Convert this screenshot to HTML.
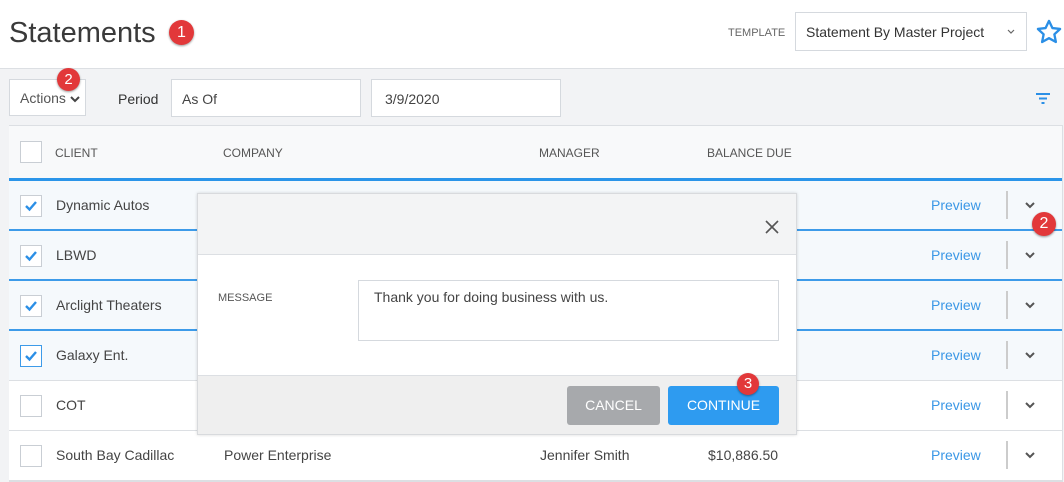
<!DOCTYPE html><html><head><style>
*{box-sizing:border-box;margin:0;padding:0}
body{width:1064px;height:482px;overflow:hidden;font-family:"Liberation Sans",sans-serif;background:#f2f3f5;position:relative;color:#333}
.a{position:absolute}
.badge{position:absolute;width:25px;height:25px;border-radius:50%;background:#e2383a;color:#fff;font-size:16px;text-align:center;line-height:25px;box-shadow:0 1px 2px rgba(0,0,0,.4)}
.cb{position:absolute;left:20px;width:22px;height:22px;border:1px solid #c9ced4;background:#fff}
.row{position:absolute;left:9px;width:1053px;height:50px;font-size:14px;color:#444}
.row span{position:absolute;top:16px}
.pv{left:922px;color:#3a97e6}
.sep{position:absolute;left:997px;top:10px;width:2px;height:28px;background:#ccc}
</style></head><body>
<div class="a" style="left:0;top:0;width:1064px;height:69px;background:#fff;border-bottom:1px solid #dcdfe3"></div>
<div class="a" style="left:9px;top:17px;font-size:29px;color:#3a3a3a">Statements</div>
<div class="badge" style="left:169px;top:20px">1</div>
<div class="a" style="left:728px;top:27px;font-size:11px;color:#666">TEMPLATE</div>
<div class="a" style="left:795px;top:12px;width:232px;height:39px;border:1px solid #d5d9de;background:#fff;font-size:14px;padding:11px 10px;color:#333">Statement By Master Project</div>
<svg class="a" style="left:1007px;top:29px" width="8" height="6"><path d="M1 1l3 3 3-3" stroke="#666" stroke-width="1.2" fill="none"/></svg>
<svg class="a" style="left:1035px;top:18px" width="28" height="28" viewBox="0 0 24 24"><path d="M12 2.5l2.9 6.1 6.6.8-4.9 4.6 1.3 6.6L12 17.3l-5.9 3.3 1.3-6.6-4.9-4.6 6.6-.8z" fill="none" stroke="#2b8fe6" stroke-width="2" stroke-linejoin="round"/></svg>

<div class="a" style="left:9px;top:79px;width:77px;height:37px;background:#fff;border:1px solid #d5d9de;font-size:14px;color:#555;padding:10px 10px">Actions</div>
<svg class="a" style="left:70px;top:95px" width="10" height="8"><path d="M1 2l4 4 4-4" stroke="#444" stroke-width="2" fill="none"/></svg>
<div class="badge" style="left:57px;top:68px;width:23px;height:23px;line-height:23px;font-size:15px">2</div>
<div class="a" style="left:118px;top:91px;font-size:14px;color:#333">Period</div>
<div class="a" style="left:171px;top:79px;width:190px;height:38px;background:#fff;border:1px solid #d5d9de;font-size:14px;padding:11px 10px;color:#444">As Of</div>
<div class="a" style="left:371px;top:79px;width:190px;height:38px;background:#fff;border:1px solid #d5d9de;font-size:14px;padding:11px 13px;color:#444">3/9/2020</div>
<svg class="a" style="left:1035px;top:92px" width="16" height="14"><path d="M1 2h14M4 6.5h8M6.5 11h3" stroke="#2b8fe6" stroke-width="2"/></svg>

<div class="a" style="left:9px;top:125px;width:1054px;height:357px;background:#fff;border:1px solid #dcdfe3"></div>
<div class="a" style="left:9px;top:126px;width:1053px;height:52px;background:#f8f9fa"></div>
<div class="cb" style="top:141px"></div>
<div class="a" style="left:55px;top:146px;font-size:12px;color:#555">CLIENT</div>
<div class="a" style="left:223px;top:146px;font-size:12px;color:#555">COMPANY</div>
<div class="a" style="left:539px;top:146px;font-size:12px;color:#555">MANAGER</div>
<div class="a" style="left:707px;top:146px;font-size:12px;color:#555">BALANCE DUE</div>
<div class="a" style="left:9px;top:178px;width:1053px;height:3px;background:#2b95e9"></div>

<div class="row" style="top:181px;background:#f5f9fc;border-bottom:2px solid #3d9be9"><span style="left:47px">Dynamic Autos</span><span class="pv">Preview</span><div class="sep"></div></div>
<div class="row" style="top:231px;background:#f5f9fc;border-bottom:2px solid #3d9be9"><span style="left:47px">LBWD</span><span class="pv">Preview</span><div class="sep"></div></div>
<div class="row" style="top:281px;background:#f5f9fc;border-bottom:2px solid #3d9be9"><span style="left:47px">Arclight Theaters</span><span class="pv">Preview</span><div class="sep"></div></div>
<div class="row" style="top:331px;background:#f5f9fc;border-bottom:1px solid #dcdfe3"><span style="left:47px">Galaxy Ent.</span><span class="pv">Preview</span><div class="sep"></div></div>
<div class="row" style="top:381px;background:#fff;border-bottom:1px solid #dcdfe3"><span style="left:47px">COT</span><span class="pv">Preview</span><div class="sep"></div></div>
<div class="row" style="top:431px;background:#fff;border-bottom:1px solid #dcdfe3"><span style="left:47px">South Bay Cadillac</span><span style="left:215px">Power Enterprise</span><span style="left:531px">Jennifer Smith</span><span style="left:699px">$10,886.50</span><span class="pv">Preview</span><div class="sep"></div></div>

<div class="cb" style="top:195px"></div><div class="cb" style="top:245px"></div><div class="cb" style="top:295px"></div><div class="cb" style="top:345px;border-color:#3d9be9"></div><div class="cb" style="top:395px"></div><div class="cb" style="top:445px"></div>
<svg class="a" style="left:24px;top:199px" width="14" height="14"><path d="M2 7l3.5 3.5L12 3" stroke="#2b8fe6" stroke-width="2.4" fill="none"/></svg>
<svg class="a" style="left:24px;top:249px" width="14" height="14"><path d="M2 7l3.5 3.5L12 3" stroke="#2b8fe6" stroke-width="2.4" fill="none"/></svg>
<svg class="a" style="left:24px;top:299px" width="14" height="14"><path d="M2 7l3.5 3.5L12 3" stroke="#2b8fe6" stroke-width="2.4" fill="none"/></svg>
<svg class="a" style="left:24px;top:349px" width="14" height="14"><path d="M2 7l3.5 3.5L12 3" stroke="#2b8fe6" stroke-width="2.4" fill="none"/></svg>

<svg class="a" style="left:1025px;top:201px" width="10" height="8"><path d="M1 2l4 4 4-4" stroke="#555" stroke-width="2" fill="none"/></svg>
<svg class="a" style="left:1025px;top:251px" width="10" height="8"><path d="M1 2l4 4 4-4" stroke="#555" stroke-width="2" fill="none"/></svg>
<svg class="a" style="left:1025px;top:301px" width="10" height="8"><path d="M1 2l4 4 4-4" stroke="#555" stroke-width="2" fill="none"/></svg>
<svg class="a" style="left:1025px;top:351px" width="10" height="8"><path d="M1 2l4 4 4-4" stroke="#555" stroke-width="2" fill="none"/></svg>
<svg class="a" style="left:1025px;top:401px" width="10" height="8"><path d="M1 2l4 4 4-4" stroke="#555" stroke-width="2" fill="none"/></svg>
<svg class="a" style="left:1025px;top:451px" width="10" height="8"><path d="M1 2l4 4 4-4" stroke="#555" stroke-width="2" fill="none"/></svg>
<div class="badge" style="left:1032px;top:212px;width:24px;height:24px;line-height:24px">2</div>

<div class="a" style="left:197px;top:193px;width:600px;height:242px;background:#fff;border:1px solid #d8dadd;box-shadow:0 0 3px rgba(0,0,0,.15)">
 <div class="a" style="left:0;top:0;width:598px;height:61px;background:#f3f4f5;border-bottom:1px solid #dcdfe3"></div>
 <svg class="a" style="left:567px;top:26px" width="14" height="14"><path d="M1 1l12 12M13 1L1 13" stroke="#555" stroke-width="1.6"/></svg>
 <div class="a" style="left:20px;top:98px;font-size:11px;color:#555">MESSAGE</div>
 <div class="a" style="left:160px;top:86px;width:421px;height:61px;border:1px solid #d5d9de;font-size:14px;padding:8px 15px;color:#444">Thank you for doing business with us.</div>
 <div class="a" style="left:0;top:181px;width:598px;height:59px;background:#efefef;border-top:1px solid #dcdfe3"></div>
 <div class="a" style="left:369px;top:192px;width:93px;height:39px;background:#a7a9ac;border-radius:3px;color:#fff;font-size:14px;text-align:center;line-height:39px">CANCEL</div>
 <div class="a" style="left:470px;top:192px;width:111px;height:39px;background:#2e9bf0;border-radius:3px;color:#fff;font-size:14px;text-align:center;line-height:39px">CONTINUE</div>
</div>
<div class="badge" style="left:737px;top:373px;width:22px;height:22px;line-height:22px;font-size:15px">3</div>
</body></html>
